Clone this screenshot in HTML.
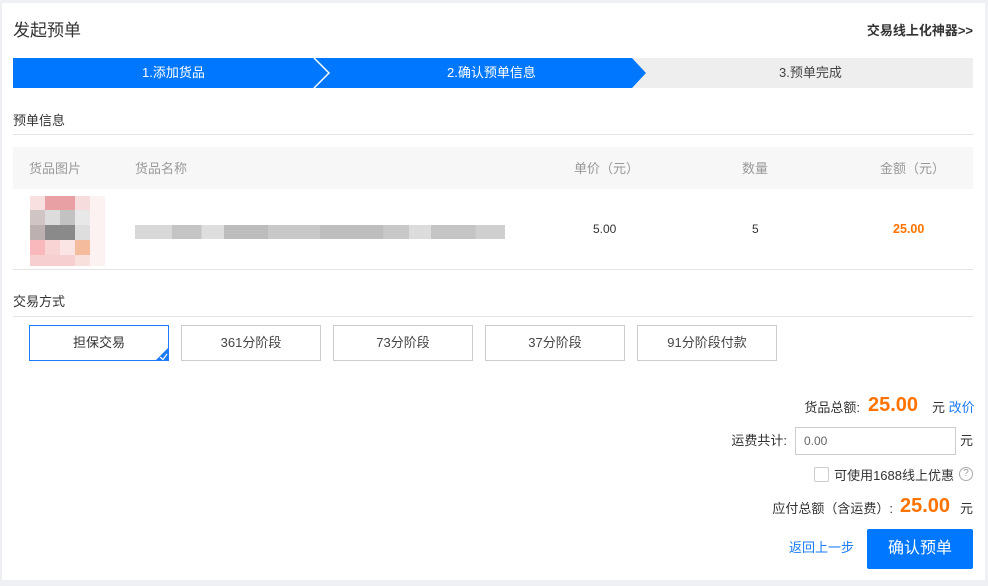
<!DOCTYPE html>
<html><head><meta charset="utf-8"><style>
*{margin:0;padding:0;box-sizing:border-box}
body{width:988px;height:586px;background:#eef0f3;position:relative;overflow:hidden;font-family:"Liberation Sans","Noto Sans CJK SC",sans-serif;font-size:12px;color:#333}
.p{position:absolute;left:2px;top:3px;width:983px;height:577px;background:#fff}
.a{position:absolute;white-space:nowrap}
.line{position:absolute;height:1px;background:#e3e3e3}
.opt{position:absolute;top:325px;width:140px;height:36px;border:1px solid #ccc;text-align:center;line-height:33px;font-size:13px;color:#444}
.or{color:#ff7300;font-weight:bold}
</style></head><body>
<div class="p"></div>
<div class="a" style="left:13px;top:20px;font-size:17px;color:#333;line-height:22px">发起预单</div>
<div class="a" style="right:15px;top:22px;font-size:13px;font-weight:bold;color:#333;line-height:18px">交易线上化神器&gt;&gt;</div>
<svg class="a" style="left:13px;top:58px" width="960" height="30">
<rect x="0" y="0" width="960" height="30" fill="#eeeeee"/>
<polygon points="0,0 619,0 633,15 619,30 0,30" fill="#0077ff"/>
<polyline points="301,0 316,15 301,30" fill="none" stroke="#fff" stroke-width="1.5"/>
</svg>
<div class="a" style="left:142px;top:64px;color:#fff;font-size:13px;line-height:18px">1.添加货品</div>
<div class="a" style="left:447px;top:64px;color:#fff;font-size:13px;line-height:18px">2.确认预单信息</div>
<div class="a" style="left:779px;top:64px;color:#444;font-size:13px;line-height:18px">3.预单完成</div>
<div class="a" style="left:13px;top:112px;font-size:13px;line-height:18px">预单信息</div>
<div class="line" style="left:13px;top:134px;width:960px"></div>
<div class="a" style="left:13px;top:147px;width:960px;height:42px;background:#f7f7f7"></div>
<div class="a" style="left:29px;top:160px;color:#999;font-size:13px;line-height:18px">货品图片</div>
<div class="a" style="left:135px;top:160px;color:#999;font-size:13px;line-height:18px">货品名称</div>
<div class="a" style="left:574px;top:160px;color:#999;font-size:13px;line-height:18px">单价（元）</div>
<div class="a" style="left:742px;top:160px;color:#999;font-size:13px;line-height:18px">数量</div>
<div class="a" style="left:880px;top:160px;color:#999;font-size:13px;line-height:18px">金额（元）</div>
<svg class="a" style="left:30px;top:196px" width="75" height="70">
<rect width="75" height="70" fill="#fdf2f2"/>
<rect x="0" y="0" width="15" height="14" fill="#f8e0e0"/><rect x="15" y="0" width="30" height="14" fill="#e8a0a4"/><rect x="45" y="0" width="15" height="14" fill="#f6dcdc"/>
<rect x="0" y="14" width="15" height="15" fill="#d0c4c4"/><rect x="15" y="14" width="15" height="15" fill="#dcdcdc"/><rect x="30" y="14" width="15" height="15" fill="#c2c2c2"/><rect x="45" y="14" width="15" height="15" fill="#e8e8e8"/>
<rect x="0" y="29" width="15" height="15" fill="#bcb0b0"/><rect x="15" y="29" width="30" height="15" fill="#8a8a8a"/><rect x="45" y="29" width="15" height="15" fill="#dedede"/>
<rect x="0" y="44" width="15" height="15" fill="#f8b8bc"/><rect x="15" y="44" width="15" height="15" fill="#f8d4d4"/><rect x="30" y="44" width="15" height="15" fill="#fae4e4"/><rect x="45" y="44" width="15" height="15" fill="#f4bc9c"/>
<rect x="0" y="59" width="45" height="11" fill="#f6d0d0"/><rect x="45" y="59" width="15" height="11" fill="#f8e0dc"/>
</svg>
<div class="a" style="left:135px;top:225px;width:370px;height:14px;background:linear-gradient(90deg,#d8d8d8 0 10%,#c4c4c4 10% 18%,#dedede 18% 24%,#bcbcbc 24% 36%,#c8c8c8 36% 50%,#bebebe 50% 67%,#c8c8c8 67% 74%,#dcdcdc 74% 80%,#c4c4c4 80% 92%,#cfcfcf 92%)"></div>
<div class="a" style="left:593px;top:221px;font-size:12px;line-height:16px">5.00</div>
<div class="a" style="left:752px;top:221px;font-size:12px;line-height:16px">5</div>
<div class="a or" style="left:893px;top:221px;font-size:12.5px;line-height:16px">25.00</div>
<div class="line" style="left:13px;top:269px;width:960px"></div>
<div class="a" style="left:13px;top:293px;font-size:13px;line-height:18px">交易方式</div>
<div class="line" style="left:13px;top:316px;width:960px"></div>
<div class="opt" style="left:29px;border-color:#1a7bf5;color:#333">担保交易
<svg style="position:absolute;right:-1px;bottom:-1px" width="14" height="14"><polygon points="14,0 14,14 0,14" fill="#1a7bf5"/><polyline points="5,10 8,12.5 12,7" fill="none" stroke="#fff" stroke-width="1.2"/></svg></div>
<div class="opt" style="left:181px">361分阶段</div>
<div class="opt" style="left:333px">73分阶段</div>
<div class="opt" style="left:485px">37分阶段</div>
<div class="opt" style="left:637px">91分阶段付款</div>
<div class="a" style="right:128px;top:399px;font-size:13px;line-height:18px">货品总额:</div>
<div class="a or" style="left:868px;top:393px;font-size:20px;line-height:24px">25.00</div>
<div class="a" style="left:932px;top:399px;font-size:13px;line-height:18px">元 <span style="color:#1a7bf5">改价</span></div>
<div class="a" style="right:201px;top:432px;font-size:13px;line-height:18px">运费共计:</div>
<div class="a" style="left:795px;top:427px;width:161px;height:28px;border:1px solid #ccc;padding-left:8px;line-height:26px;color:#666">0.00</div>
<div class="a" style="left:960px;top:432px;font-size:13px;line-height:18px">元</div>
<div class="a" style="right:15px;top:465px;display:flex;align-items:center;height:18px;font-size:13px">
<span style="display:inline-block;width:15px;height:15px;border:1px solid #ccc;border-radius:2px;margin-right:5px"></span>
<span>可使用1688线上优惠</span>
<span style="display:inline-block;width:14px;height:14px;border:1px solid #aaa;border-radius:50%;font-size:10px;line-height:12px;text-align:center;color:#999;margin-left:5px">?</span>
</div>
<div class="a" style="right:95px;top:500px;font-size:13px;line-height:18px">应付总额（含运费）:</div>
<div class="a or" style="left:900px;top:494px;font-size:20px;line-height:24px">25.00</div>
<div class="a" style="left:960px;top:500px;font-size:13px;line-height:18px">元</div>
<div class="a" style="right:134px;top:539px;font-size:13px;line-height:18px;color:#1a7bf5">返回上一步</div>
<div class="a" style="left:867px;top:529px;width:106px;height:40px;background:#0077ff;border-radius:2px;color:#fff;font-size:16px;text-align:center;line-height:40px">确认预单</div>
</body></html>
